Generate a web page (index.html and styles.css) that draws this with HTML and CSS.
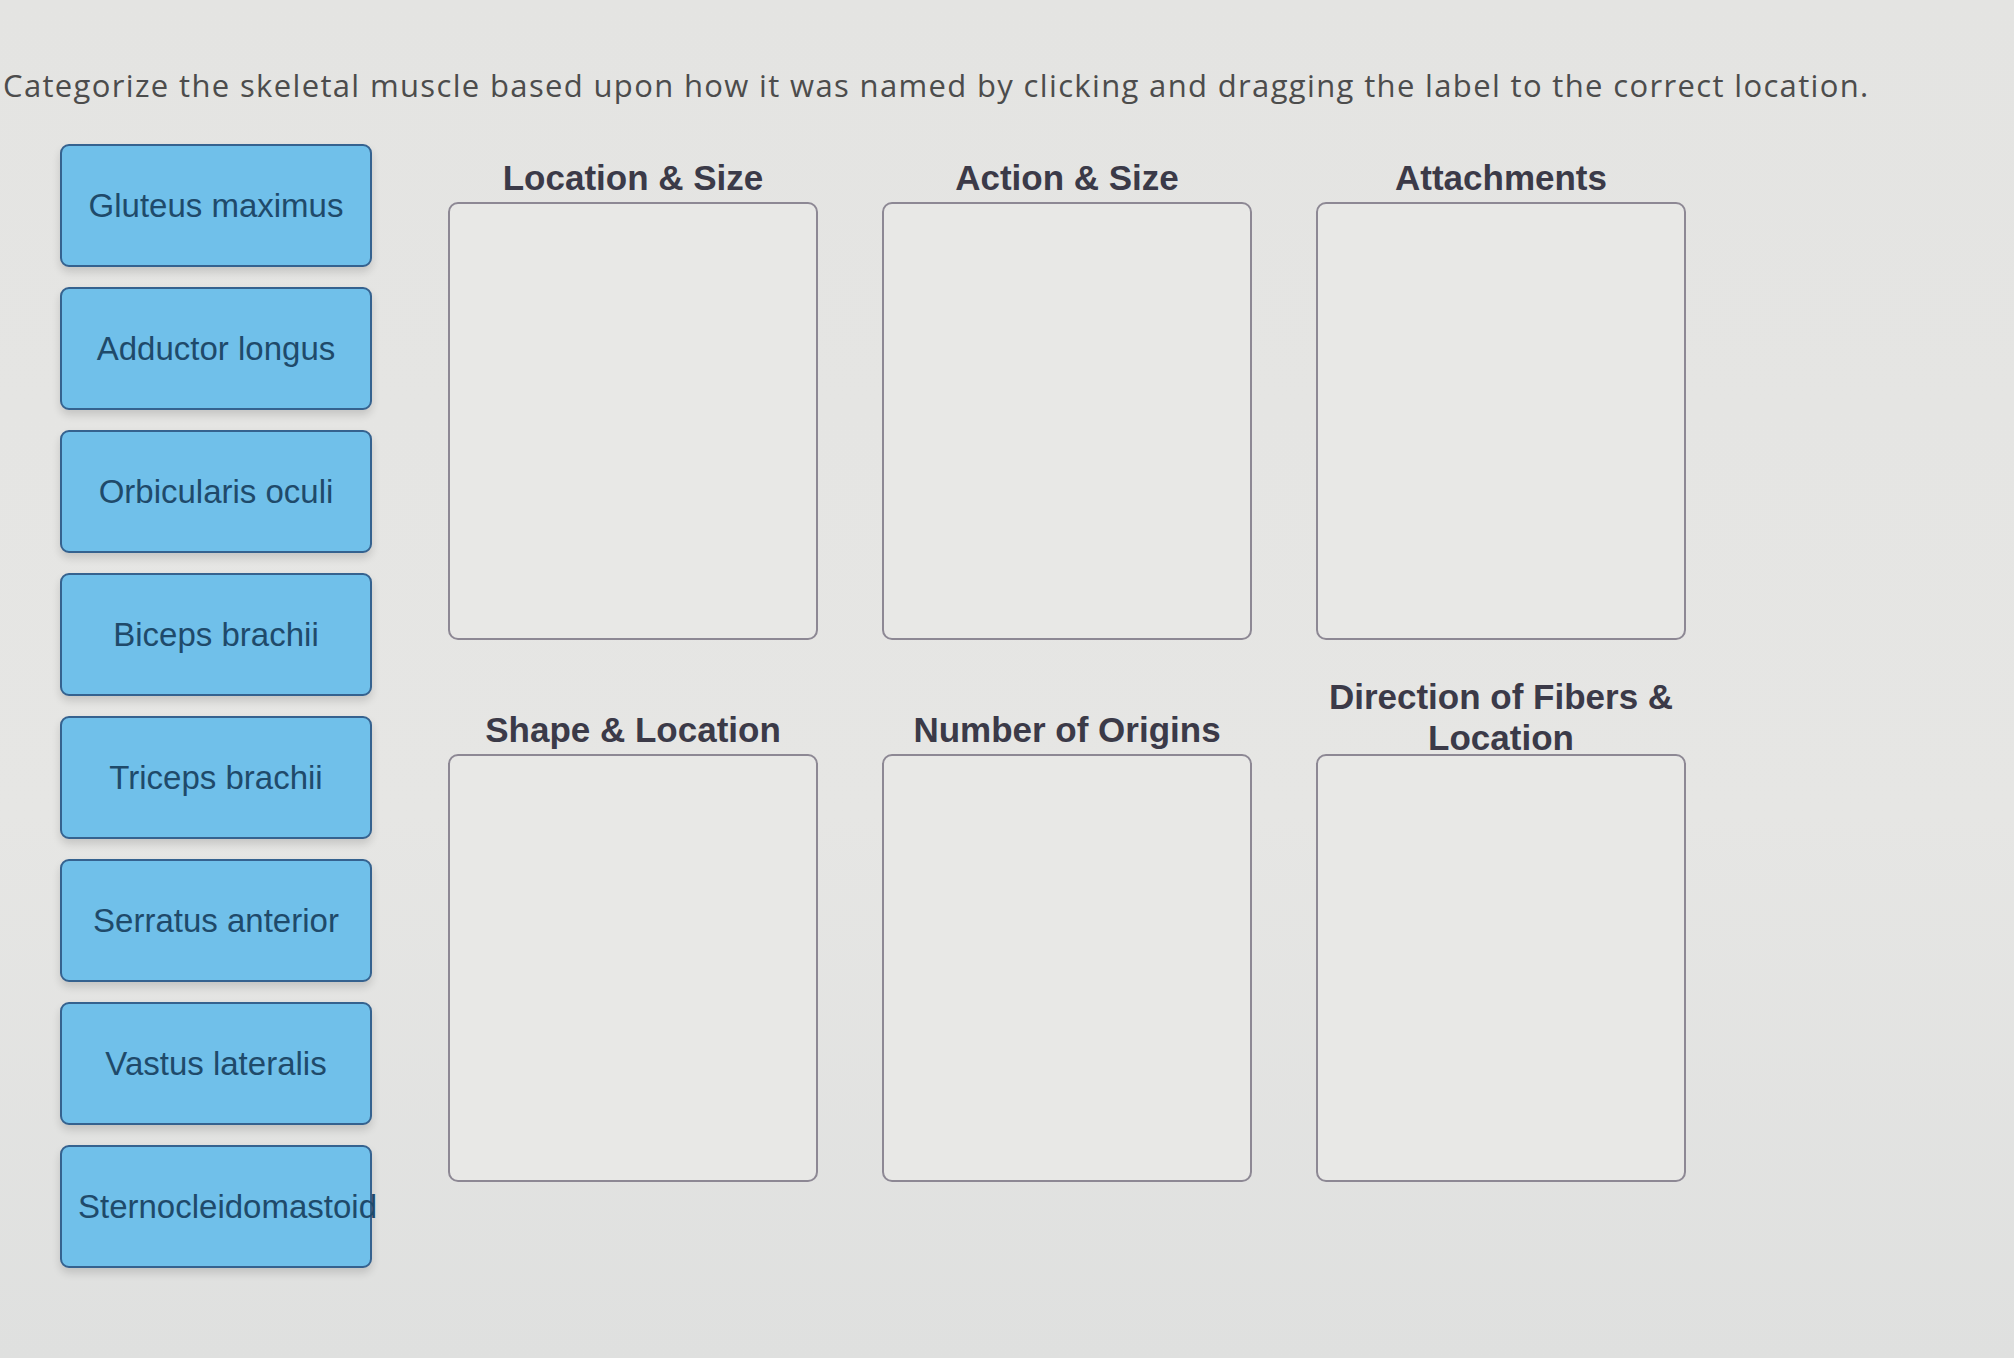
FILE: index.html
```html
<!DOCTYPE html>
<html>
<head>
  <link rel="stylesheet" href="styles.css">
</head>
<body>
  <div class="page">
    <p class="prompt">Categorize the skeletal muscle based upon how it was named by clicking and dragging the label to the correct location.</p>

    <div class="workspace">
      <div class="labels">
        <div class="label">Gluteus maximus</div>
        <div class="label">Adductor longus</div>
        <div class="label">Orbicularis oculi</div>
        <div class="label">Biceps brachii</div>
        <div class="label">Triceps brachii</div>
        <div class="label">Serratus anterior</div>
        <div class="label">Vastus lateralis</div>
        <div class="label">Sternocleidomastoid</div>
      </div>

      <div class="zones">
        <div class="zone-title">Location &amp; Size</div>
        <div class="zone-title">Action &amp; Size</div>
        <div class="zone-title">Attachments</div>
        <div class="drop-box"></div>
        <div class="drop-box"></div>
        <div class="drop-box"></div>
        <div class="zone-title">Shape &amp; Location</div>
        <div class="zone-title">Number of Origins</div>
        <div class="zone-title tall">Direction of Fibers &amp;<br>Location</div>
        <div class="drop-box"></div>
        <div class="drop-box"></div>
        <div class="drop-box"></div>
      </div>
    </div>
  </div>
</body>
</html>
```

FILE: styles.css
```css
body {
  margin: 0;
  min-height: 1358px;
  background: linear-gradient(180deg, #e4e4e2 0%, #e6e6e4 60%, #dfe0df 100%);
  font-family: Arial, 'Liberation Sans', sans-serif;
  overflow: hidden;
}

.page {
  padding-top: 66px;
}

.prompt {
  margin: 0 0 0 3px;
  font-family: 'Open Sans', sans-serif;
  font-size: 31px;
  letter-spacing: 1.35px;
  line-height: 38px;
  color: #4c4c4c;
  white-space: nowrap;
}

.workspace {
  display: flex;
  gap: 76px;
  margin: 40px 0 0 60px;
}

.labels {
  display: flex;
  flex-direction: column;
  gap: 20px;
  width: 312px;
}

.label {
  height: 123px;
  box-sizing: border-box;
  padding: 0 16px;
  display: flex;
  flex-direction: column;
  justify-content: center;
  text-align: center;
  background: #70c0ea;
  border: 2px solid #35628f;
  border-radius: 9px;
  box-shadow: 0 5px 8px rgba(0,0,0,0.14);
  color: #1f4a6a;
  font-size: 33px;
  white-space: nowrap;
}

.zones {
  display: grid;
  grid-template-columns: repeat(3, 370px);
  grid-template-rows: 58px 438px 114px 428px;
  column-gap: 64px;
}

.zone-title {
  align-self: end;
  padding-bottom: 4px;
  text-align: center;
  font-size: 35px;
  font-weight: 700;
  line-height: 40px;
  color: #3b3a48;
}

.zone-title.tall {
  padding-bottom: 0;
  line-height: 41px;
  margin-bottom: -4px;
}

.drop-box {
  border: 2px solid #8d8894;
  border-radius: 10px;
  background: #e8e8e6;
}
```
